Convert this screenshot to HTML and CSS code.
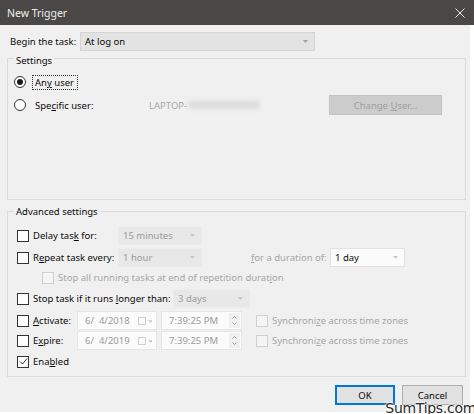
FILE: index.html
```html
<!DOCTYPE html>
<html>
<head>
<meta charset="utf-8">
<link rel="stylesheet" href="styles.css">
</head>
<body>
<div class="window">
  <div class="titlebar">
    <span class="title">New Trigger</span>
    <svg class="close" width="10" height="10" viewBox="0 0 10 10"><path d="M0.5 0.5 L9.5 9.5 M9.5 0.5 L0.5 9.5" stroke="#e8e8e8" stroke-width="1"/></svg>
  </div>
  <div class="content">
    <div class="begin-row">
      <span class="begin-label">Begin the task:</span>
      <div class="combo begin-combo"><span>At log on</span><svg class="arrow" width="5" height="3" viewBox="0 0 5 3"><path d="M0 0 L2.5 3 L5 0Z" fill="#a0a0a0"/></svg></div>
    </div>

    <div class="group settings">
      <div class="legend">Settings</div>
      <div class="row any-row">
        <span class="radio checked"><span class="dot"></span></span>
        <span class="focus">An<u>y</u> user</span>
      </div>
      <div class="row spec-row">
        <span class="radio"></span>
        <span class="spec-label">Spe<u>c</u>ific user:</span>
        <span class="laptop"><span>LAPTOP-</span><span class="blur"></span></span>
        <span class="btn disabled change"><span>Change <u>U</u>ser...</span></span>
      </div>
    </div>

    <div class="group advanced">
      <div class="legend">Advanced settings</div>
      <div class="row r-delay">
        <span class="check"></span>
        <span class="lbl w85">Delay tas<u>k</u> for:</span>
        <div class="combo dis w84"><span>15 minutes</span><svg class="arrow" width="5" height="3" viewBox="0 0 5 3"><path d="M0 0 L2.5 3 L5 0Z" fill="#c8c8c8"/></svg></div>
      </div>
      <div class="row r-repeat">
        <span class="check"></span>
        <span class="lbl w85">R<u>e</u>peat task every:</span>
        <div class="combo dis w84"><span>1 hour</span><svg class="arrow" width="5" height="3" viewBox="0 0 5 3"><path d="M0 0 L2.5 3 L5 0Z" fill="#c8c8c8"/></svg></div>
        <span class="lbl grey dur"><u>f</u>or a duration of:</span>
        <div class="combo white w75"><span>1 day</span><svg class="arrow" width="5" height="3" viewBox="0 0 5 3"><path d="M0 0 L2.5 3 L5 0Z" fill="#c8c8c8"/></svg></div>
      </div>
      <div class="row r-stopall">
        <span class="check disc"></span>
        <span class="lbl grey">Stop all running tasks at end of repetition durat<u>i</u>on</span>
      </div>
      <div class="row r-stop">
        <span class="check"></span>
        <span class="lbl w140">Stop task if it runs <u>l</u>onger than:</span>
        <div class="combo dis w77"><span>3 days</span><svg class="arrow" width="5" height="3" viewBox="0 0 5 3"><path d="M0 0 L2.5 3 L5 0Z" fill="#c8c8c8"/></svg></div>
      </div>
      <div class="row r-act">
        <span class="check"></span>
        <span class="lbl w44"><u>A</u>ctivate:</span>
        <div class="picker date"><span>6/&nbsp; 4/2018</span><svg class="cal" width="14" height="8" viewBox="0 0 14 8"><rect x="0.5" y="0.5" width="7" height="7" fill="none" stroke="#cfcfcf"/><path d="M10 3 L12.5 6 L15 3Z" fill="#cfcfcf"/></svg></div>
        <div class="picker time"><span>7:39:25 PM</span><svg class="spin" width="11" height="15" viewBox="0 0 11 15"><rect width="11" height="15" fill="#f0f0f0"/><path d="M3.5 5.5 L5.5 3.5 L7.5 5.5 M3.5 9.5 L5.5 11.5 L7.5 9.5" fill="none" stroke="#a0a0a0" stroke-width="1"/></svg></div>
        <span class="check disc sync"></span>
        <span class="lbl grey">Synchroni<u>z</u>e across time zones</span>
      </div>
      <div class="row r-exp">
        <span class="check"></span>
        <span class="lbl w44">E<u>x</u>pire:</span>
        <div class="picker date"><span>6/&nbsp; 4/2019</span><svg class="cal" width="14" height="8" viewBox="0 0 14 8"><rect x="0.5" y="0.5" width="7" height="7" fill="none" stroke="#cfcfcf"/><path d="M10 3 L12.5 6 L15 3Z" fill="#cfcfcf"/></svg></div>
        <div class="picker time"><span>7:39:25 PM</span><svg class="spin" width="11" height="15" viewBox="0 0 11 15"><rect width="11" height="15" fill="#f0f0f0"/><path d="M3.5 5.5 L5.5 3.5 L7.5 5.5 M3.5 9.5 L5.5 11.5 L7.5 9.5" fill="none" stroke="#a0a0a0" stroke-width="1"/></svg></div>
        <span class="check disc sync"></span>
        <span class="lbl grey">Synchroni<u>z</u>e across time zones</span>
      </div>
      <div class="row r-en">
        <span class="check on"><svg width="9" height="9" viewBox="0 0 9 9"><path d="M1 4.5 L3.5 7 L8 1.5" fill="none" stroke="#333" stroke-width="1"/></svg></span>
        <span class="lbl">Ena<u>b</u>led</span>
      </div>
    </div>

    <div class="buttons">
      <span class="btn ok">OK</span>
      <span class="btn cancel">Cancel</span>
    </div>
  </div>
  <div class="watermark">SumTips.com</div>
</div>
</body>
</html>
```

FILE: styles.css
```css
html, body {
  margin: 0;
  padding: 0;
  background: #ffffff;
}
body {
  width: 474px;
  height: 414px;
  overflow: hidden;
  font-family: "Segoe UI", "Noto Sans", "Open Sans", sans-serif;
  font-size: 9.5px;
  color: #0a0a0a;
}
u { text-decoration: underline; text-underline-offset: 1px; }
.window {
  position: relative;
  width: 470px;
  height: 412px;
  background: #f0f0f0;
  display: flex;
  flex-direction: column;
}
.titlebar {
  height: 25px;
  flex: 0 0 25px;
  background: #4a4846;
  display: flex;
  align-items: center;
  justify-content: space-between;
  padding: 0 9px 0 7px;
  width: 474px;
  box-sizing: border-box;
}
.title {
  color: #ececec;
  font-size: 10.5px;
}
.close { display: block; }
.content {
  padding: 7px 4px 0 7px;
  display: flex;
  flex-direction: column;
}
.begin-row {
  display: flex;
  align-items: center;
  height: 19px;
}
.begin-label {
  width: 73px;
  padding-left: 3px;
  box-sizing: border-box;
}
.combo {
  height: 19px;
  box-sizing: border-box;
  display: flex;
  align-items: center;
  justify-content: space-between;
  padding: 0 6px 0 4px;
  border: 1px solid #d4d4d4;
  background: #e3e3e3;
}
.arrow { display: block; }
.begin-combo {
  width: 235px;
}
.group {
  border: 1px solid #dcdcdc;
  box-sizing: border-box;
  width: 459px;
}
.legend {
  width: fit-content;
  margin-top: -5px;
  margin-left: 6px;
  padding: 0 2px;
  background: #f0f0f0;
  height: 13px;
  line-height: 13px;
}
.advanced .legend { margin-top: -7px; }
.settings {
  margin-top: 7px;
  height: 142px;
}
.advanced {
  margin-top: 11px;
  height: 166px;
}
.row {
  display: flex;
  align-items: center;
  padding-left: 9px;
}
.radio {
  width: 12px;
  height: 12px;
  border: 1px solid #333;
  border-radius: 50%;
  box-sizing: border-box;
  background: #fff;
  display: flex;
  align-items: center;
  justify-content: center;
  flex: 0 0 auto;
}
.radio .dot {
  width: 6px;
  height: 6px;
  border-radius: 50%;
  background: #1a1a1a;
}
.settings .row { padding-left: 6px; }
.any-row {
  margin-top: 7px;
  height: 16px;
}
.focus {
  margin-left: 6px;
  border: 1px dotted #333;
  padding: 0 3px 0 2px;
  height: 15px;
  line-height: 14px;
  box-sizing: border-box;
}
.spec-row {
  margin-top: 5px;
  height: 20px;
}
.spec-label {
  margin-left: 9px;
  width: 114px;
}
.laptop {
  color: #a8a8a8;
  display: flex;
  align-items: center;
  width: 180px;
}
.blur {
  display: inline-block;
  width: 72px;
  height: 8px;
  margin-left: 1px;
  border-radius: 4px;
  background: #dcdcdc;
  filter: blur(2px);
}
.btn {
  display: flex;
  align-items: center;
  justify-content: center;
  box-sizing: border-box;
}
.btn.disabled {
  background: #cccccc;
  border: 1px solid #c4c4c4;
  color: #a0a0a0;
}
.change {
  width: 113px;
  height: 20px;
}
.check {
  width: 12px;
  height: 12px;
  border: 1px solid #333;
  box-sizing: border-box;
  background: #ffffff;
  flex: 0 0 auto;
  display: flex;
  align-items: center;
  justify-content: center;
}
.check.disc {
  border-color: #cfcfcf;
  background: #f4f4f4;
}
.lbl {
  margin-left: 4px;
  white-space: nowrap;
  box-sizing: border-box;
}
.grey { color: #a6a6a6; }
.w85 { width: 85px; }
.w140 { width: 140px; }
.w44 { width: 44px; }
.combo.dis {
  background: #e8e8e8;
  border-color: #ececec;
  color: #9a9a9a;
}
.combo.white {
  background: #fbfbfb;
  border-color: #e2e2e2;
}
.w84 { width: 84px; }
.w75 { width: 75px; }
.w77 { width: 77px; }
.dur {
  margin-left: 49px;
  width: 79px;
}
.advanced .row { height: 19px; }
.r-delay { margin-top: 8px; }
.r-repeat { margin-top: 3px; }
.r-stopall { margin-top: 1px; }
.advanced .r-stopall { padding-left: 34px; }
.r-stop { margin-top: 2px; }
.r-act { margin-top: 3px; }
.r-exp { margin-top: 1px; }
.r-en { margin-top: 2px; }
.picker {
  height: 19px;
  box-sizing: border-box;
  background: #fbfbfb;
  border: 1px solid #e6e6e6;
  color: #9a9a9a;
  display: flex;
  align-items: center;
  justify-content: space-between;
  padding: 0 2px 0 7px;
}
.date { width: 80px; padding-right: 4px; }
.time { width: 81px; margin-left: 4px; padding-right: 1px; }
.cal { display: block; }
.spin { display: block; }
.sync { margin-left: 14px; }
.buttons {
  display: flex;
  justify-content: flex-end;
  gap: 7px;
  margin-top: 8px;
  padding-right: 3px;
}
.ok {
  width: 60px;
  height: 20px;
  background: #e1e1e1;
  border: 2px solid #0078d7;
}
.cancel {
  width: 61px;
  height: 20px;
  background: #e1e1e1;
  border: 1px solid #adadad;
}
.watermark {
  position: absolute;
  right: -6px;
  bottom: -4px;
  font-family: "DejaVu Sans", sans-serif;
  font-size: 14px;
  color: #2a2a2a;
  text-shadow: 0 0 2px #fff, 0 0 2px #fff, 0 0 2px #fff;
  letter-spacing: -0.3px;
}
```
